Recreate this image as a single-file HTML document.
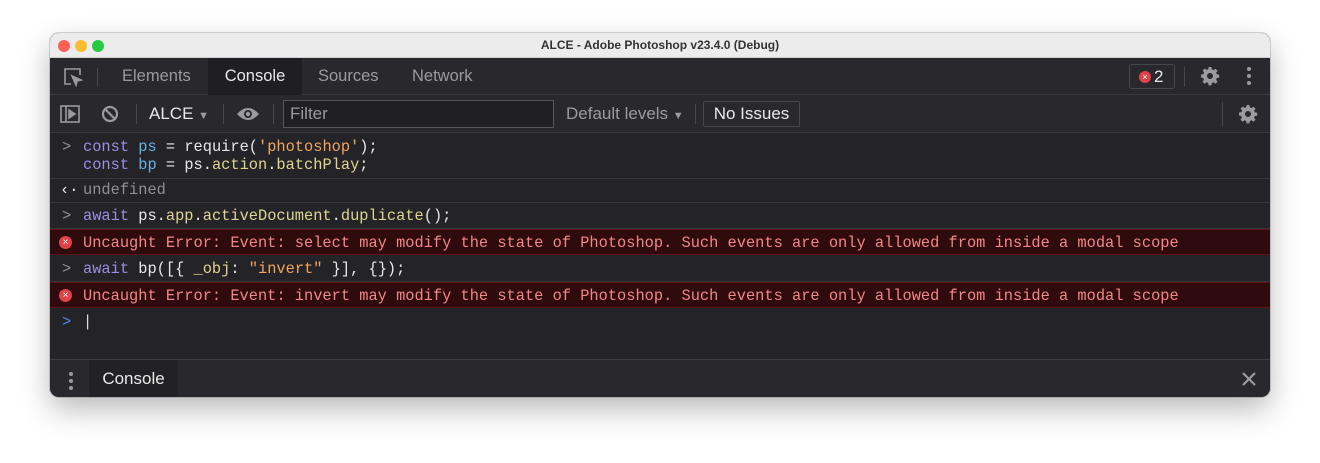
<!DOCTYPE html>
<html><head><meta charset="utf-8"><style>
*{margin:0;padding:0;box-sizing:border-box}
body{width:1320px;height:463px;background:#fff;position:relative;overflow:hidden;font-family:"Liberation Sans",sans-serif}
.win{position:absolute;left:50px;top:33px;width:1220px;height:364px;border-radius:9px;background:#242428;overflow:hidden;box-shadow:0 12px 30px rgba(0,0,0,.28),0 0 0 1px rgba(0,0,0,.15)}
.title{height:25px;background:#ececec;border-bottom:1px solid #d0d0d0;position:relative;text-align:center;font-size:12px;font-weight:bold;color:#333;line-height:25px}
.dot{position:absolute;top:7px;width:12px;height:12px;border-radius:50%}
.tabs{position:absolute;top:25px;left:0;right:0;height:37px;background:#29292d;border-bottom:1px solid #3a3a3e}
.tab{position:absolute;top:0;height:37px;line-height:37px;font-size:16.5px;color:#9a9aa0}
.tb{position:absolute;top:62px;left:0;right:0;height:38px;background:#29292d;border-bottom:1px solid #3a3a3e}
.sep{position:absolute;width:1px;background:#47474c}
.code{position:absolute;left:0;right:0;font-family:"Liberation Mono",monospace;font-size:15.35px;white-space:pre}
.ln{position:absolute;left:0;right:0;height:26px;line-height:26px;border-bottom:1px solid #37373b}
.ln .t{position:absolute;left:33px}
.err{background:#2f0b0d;border-top:1px solid #5c1419;border-bottom:1px solid #5c1419;color:#f2868a}
.k{color:#9a8ee0}.v{color:#64b2e6}.s{color:#f1a55f}.m{color:#dfd490}.w{color:#e8e8e8}.g{color:#8f8f95}
.drawer{position:absolute;left:0;right:0;top:326px;height:38px;background:#29292d;border-top:1px solid #3e3e42}
</style></head><body>
<svg width="0" height="0" style="position:absolute"><defs><g id="gear"><path fill="#9a9aa0" fill-rule="evenodd" d="M8.6 1h2.8l.5 2.4 1.6.7 2-1.4 2 2-1.4 2 .7 1.6 2.4.5v2.8l-2.4.5-.7 1.6 1.4 2-2 2-2-1.4-1.6.7-.5 2.4H8.6l-.5-2.4-1.6-.7-2 1.4-2-2 1.4-2-.7-1.6L1 11.4V8.6l2.4-.5.7-1.6-1.4-2 2-2 2 1.4 1.6-.7zM10 7a3 3 0 100 6 3 3 0 100-6z"/></g></defs></svg>
<div class="win">
 <div class="title">ALCE - Adobe Photoshop v23.4.0 (Debug)
  <div class="dot" style="left:8px;background:#fe5f57"></div>
  <div class="dot" style="left:25px;background:#febc2e"></div>
  <div class="dot" style="left:42px;background:#28c840"></div>
 </div>
 <div class="tabs">
  <svg style="position:absolute;left:13px;top:9px" width="20" height="20" viewBox="0 0 20 20" fill="none" stroke="#9a9aa0" stroke-width="1.6"><path d="M8 17H2V2h15v6"/><path d="M9 9l9 4-4 1-1 4z" fill="#9a9aa0"/></svg>
  <div class="sep" style="left:47px;top:10px;height:18px"></div>
  <div class="tab" style="left:72px">Elements</div>
  <div class="tab" style="left:158px;width:94px;background:#1f1f22;color:#e8e8e8;text-align:center">Console</div>
  <div class="tab" style="left:268px">Sources</div>
  <div class="tab" style="left:362px">Network</div>
  <div style="position:absolute;left:1079px;top:6px;width:46px;height:25px;border:1px solid #46464b;border-radius:3px;color:#e8e8e8;font-size:17px;line-height:23px;padding-left:24px">2<div style="position:absolute;left:9px;top:6px;width:12px;height:12px;border-radius:50%;background:#e0424a;color:#fff;font-size:9px;line-height:12px;text-align:center">×</div></div>
  <div class="sep" style="left:1134px;top:9px;height:20px"></div>
  <svg style="position:absolute;left:1150px;top:8px" width="20" height="20" viewBox="0 0 20 20"><use href="#gear"/></svg>
  <div style="position:absolute;left:1197px;top:9px;width:4px">
   <div style="width:4px;height:4px;border-radius:50%;background:#9a9aa0;margin-bottom:3px"></div><div style="width:4px;height:4px;border-radius:50%;background:#9a9aa0;margin-bottom:3px"></div><div style="width:4px;height:4px;border-radius:50%;background:#9a9aa0"></div></div>
 </div>
 <div class="tb">
  <svg style="position:absolute;left:10px;top:10px" width="20" height="18" viewBox="0 0 20 18" fill="none" stroke="#9a9aa0" stroke-width="1.6"><rect x="1" y="1" width="18" height="16"/><path d="M6 1v16"/><path d="M9 5l6 4-6 4z" fill="#9a9aa0"/></svg>
  <svg style="position:absolute;left:51px;top:10px" width="18" height="18" viewBox="0 0 18 18" fill="none" stroke="#9a9aa0" stroke-width="2.2"><circle cx="9" cy="9" r="7"/><path d="M4 4l10 10"/></svg>
  <div class="sep" style="left:86px;top:9px;height:20px"></div>
  <div style="position:absolute;left:99px;top:0;line-height:38px;font-size:17px;color:#e8e8e8">ALCE <span style="font-size:11px;color:#9a9aa0">▼</span></div>
  <div class="sep" style="left:173px;top:9px;height:20px"></div>
  <svg style="position:absolute;left:186px;top:11px" width="24" height="16" viewBox="0 0 24 16"><path d="M1 8Q12-4 23 8Q12 20 1 8z" fill="#9a9aa0"/><circle cx="12" cy="8" r="4" fill="#29292d"/><circle cx="12" cy="8" r="2.2" fill="#9a9aa0"/></svg>
  <div class="sep" style="left:223px;top:9px;height:20px"></div>
  <div style="position:absolute;left:233px;top:5px;width:271px;height:28px;border:1px solid #56565b;background:#202023;color:#9a9aa0;font-size:17px;line-height:26px;padding-left:6px">Filter</div>
  <div style="position:absolute;left:516px;top:0;line-height:38px;font-size:17px;color:#9a9aa0">Default levels <span style="font-size:11px">▼</span></div>
  <div class="sep" style="left:645px;top:9px;height:20px"></div>
  <div style="position:absolute;left:653px;top:6px;width:97px;height:26px;border:1px solid #46464b;border-radius:2px;color:#e8e8e8;font-size:17px;line-height:24px;text-align:center">No Issues</div>
  <div class="sep" style="left:1172px;top:7px;height:24px"></div>
  <svg style="position:absolute;left:1188px;top:9px" width="20" height="20" viewBox="0 0 20 20"><use href="#gear"/></svg>
 </div>
 <div class="code" style="top:101px">
  <div class="ln" style="top:0;height:45px;line-height:18px;padding-top:4px"><span style="position:absolute;left:12px;top:4px" class="g">&gt;</span><span class="t" style="top:4px"><span class="k">const</span> <span class="v">ps</span> <span class="w">= require(</span><span class="s">'photoshop'</span><span class="w">);</span>
<span class="k">const</span> <span class="v">bp</span> <span class="w">= ps.</span><span class="m">action</span><span class="w">.</span><span class="m">batchPlay</span><span class="w">;</span></span></div>
  <div class="ln" style="top:45px;height:24px;line-height:22px"><span style="position:absolute;left:10px" class="w">‹·</span><span class="t g">undefined</span></div>
  <div class="ln" style="top:69px"><span style="position:absolute;left:12px" class="g">&gt;</span><span class="t"><span class="k">await</span> <span class="w">ps.</span><span class="m">app</span><span class="w">.</span><span class="m">activeDocument</span><span class="w">.</span><span class="m">duplicate</span><span class="w">();</span></span></div>
  <div class="ln err" style="top:95px"><span style="position:absolute;left:9px;top:6px;width:13px;height:13px;border-radius:50%;background:#e0424a;color:#fff;font-size:10px;line-height:13px;text-align:center;font-family:'Liberation Sans'">×</span><span class="t">Uncaught Error: Event: select may modify the state of Photoshop. Such events are only allowed from inside a modal scope</span></div>
  <div class="ln" style="top:122px"><span style="position:absolute;left:12px" class="g">&gt;</span><span class="t"><span class="k">await</span> <span class="w">bp([{ </span><span class="m">_obj</span><span class="w">: </span><span class="s">"invert"</span><span class="w"> }], {});</span></span></div>
  <div class="ln err" style="top:148px"><span style="position:absolute;left:9px;top:6px;width:13px;height:13px;border-radius:50%;background:#e0424a;color:#fff;font-size:10px;line-height:13px;text-align:center;font-family:'Liberation Sans'">×</span><span class="t">Uncaught Error: Event: invert may modify the state of Photoshop. Such events are only allowed from inside a modal scope</span></div>
  <div class="ln" style="top:175px;border:none"><span style="position:absolute;left:12px;color:#4d8fe8">&gt;</span><span class="t" style="color:#ddd">|</span></div>
 </div>
 <div class="drawer">
  <div style="position:absolute;left:19px;top:12px;width:4px"><div style="width:4px;height:4px;border-radius:50%;background:#9a9aa0;margin-bottom:3px"></div><div style="width:4px;height:4px;border-radius:50%;background:#9a9aa0;margin-bottom:3px"></div><div style="width:4px;height:4px;border-radius:50%;background:#9a9aa0"></div></div>
  <div style="position:absolute;left:39px;top:0;width:89px;height:37px;background:#222225;color:#e8e8e8;font-size:17px;line-height:37px;text-align:center">Console</div>
  <svg style="position:absolute;left:1192px;top:12px" width="14" height="14" viewBox="0 0 14 14" stroke="#9a9aa0" stroke-width="2.2"><path d="M1 1l12 12M13 1L1 13"/></svg>
 </div>
</div>
</body></html>
